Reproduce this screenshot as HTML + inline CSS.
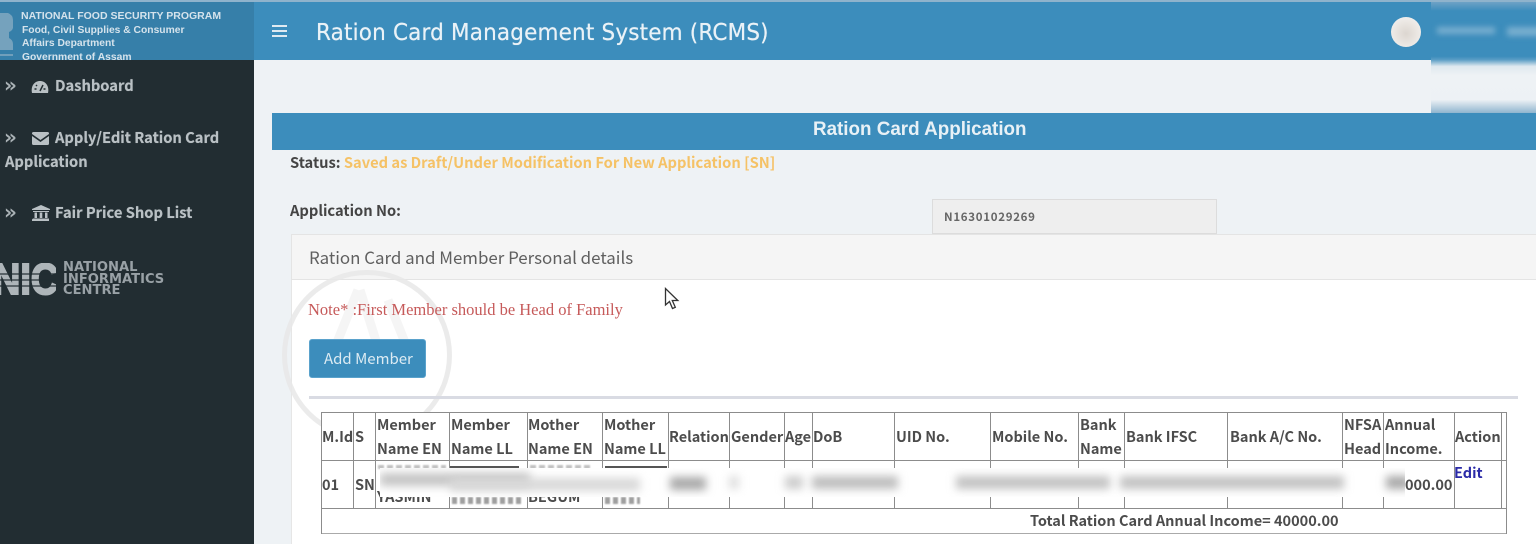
<!DOCTYPE html>
<html style="background:#eef2f5"><head><meta charset="utf-8"><style>
html,body{margin:0;padding:0}
body{width:1536px;height:544px;position:relative;overflow:hidden;background:#eef2f5;font-family:"Noto Sans CJK JP","DejaVu Sans",sans-serif;color:#444}
#w{position:absolute;left:0;top:0;width:1536px;height:544px;overflow:hidden;filter:blur(.35px)}
.a{position:absolute;white-space:nowrap}
.b{font-weight:700}
.ln{position:absolute;background:#8c8c8c}
.h{left:321px;width:1186px;height:1px}
.v{top:412px;width:1px;height:97px}
.th{position:absolute;font-weight:700;font-size:14.5px;line-height:24px;color:#4c4c4c;white-space:nowrap}
.nav{color:#b9c0c4;font-weight:700;font-size:14.7px;text-shadow:0 0 .5px #b9c0c4}
.chev{color:#aab2b6;font-weight:700;font-size:20px;line-height:20px;font-family:"DejaVu Sans",sans-serif}
.bl{position:absolute;top:476px;height:13px;filter:blur(4.5px)}
svg{position:absolute;overflow:visible}
</style></head><body><div id="w">
<div class="a" style="left:0;top:0;width:1536px;height:60px;background:#3c8dbc;border-top:2px solid #8fb3cc;box-sizing:border-box"></div>
<div class="a" style="left:0;top:2px;width:254px;height:58px;background:#367fa9;overflow:hidden">
 <div class="a b" style="left:21px;top:7px;font:700 10.5px/14px 'Liberation Sans',sans-serif;color:#d5e3ec">NATIONAL FOOD SECURITY PROGRAM</div>
 <div class="a b" style="left:22px;top:22px;font:700 10.3px/13px 'Liberation Sans',sans-serif;color:#d5e3ec">Food, Civil Supplies &amp; Consumer<br>Affairs Department<br><span style="position:relative;top:1px">Government of Assam</span></div>
 <svg style="left:0;top:0" width="16" height="58" viewBox="0 0 16 58"><path d="M0 11H8Q13 13 13 18V26Q12 29 9 30V36Q13 38 13 42V48H0z" fill="#a9bfce" opacity=".55"/><path d="M0 52H13V54H0z" fill="#a9bfce" opacity=".5"/></svg>
</div>
<div class="a" style="left:272px;top:25px;width:15px;height:2.4px;background:#dfeaf1;box-shadow:0 5px 0 #dfeaf1,0 10px 0 #dfeaf1"></div>
<div class="a" style="left:316px;top:15px;font:400 23.5px/34px 'DejaVu Sans',sans-serif;color:#eaf2f7;transform:scaleX(.915);transform-origin:0 0;letter-spacing:.2px;text-shadow:0 0 .6px #eaf2f7">Ration Card Management System (RCMS)</div>
<div class="a" style="left:1391px;top:17px;width:30px;height:30px;border-radius:50%;background:radial-gradient(circle at 50% 55%,#dcd6d0 0,#ece8e4 55%,#f4f6f8 100%)"></div>
<div class="a" style="left:1431px;top:2px;width:105px;height:111px;overflow:hidden;background:linear-gradient(#6ea2c5 0,#3c8dbc 8%,#3c8dbc 49%,#5a9dc5 52%,#dfe9ef 58%,#eef2f5 66%,#edf1f5 88%,#8fb5cf 100%)">
 <div class="a" style="left:6px;top:25px;width:58px;height:7px;background:#78aecf;filter:blur(3px)"></div>
 <div class="a" style="left:76px;top:25px;width:40px;height:9px;background:#78aecf;filter:blur(3px)"></div>
</div>

<div class="a" style="left:0;top:60px;width:254px;height:484px;background:#222d32"></div>
<div class="a chev" style="left:4px;top:75px">»</div>
<svg style="left:31px;top:80px" width="18" height="14" viewBox="0 0 18 14"><path d="M1 13C-.5 6 3.500 1 9 1s9.500 5 8 12z" fill="#b9c0c4"/><path d="M9 11L12 5M3.500 9h2M12.500 9h2M5 5l1 1" stroke="#222d32" stroke-width="1.500"/></svg>
<div class="a nav" style="left:55px;top:75px;line-height:22px">Dashboard</div>
<div class="a chev" style="left:4px;top:127px">»</div>
<svg style="left:32px;top:132px" width="17" height="13" viewBox="0 0 17 13"><path d="M0 1.500Q0 0 1.500 0h14Q17 0 17 1.500v.5l-8.500 6L0 2zM0 4l8.500 6L17 4v7.500Q17 13 15.500 13h-14Q0 13 0 11.500z" fill="#b9c0c4"/></svg>
<div class="a nav" style="left:55px;top:127px;line-height:22px">Apply/Edit Ration Card</div>
<div class="a nav" style="left:5px;top:151px;line-height:22px">Application</div>
<div class="a chev" style="left:4px;top:202px">»</div>
<svg style="left:32px;top:205px" width="18" height="16" viewBox="0 0 18 16"><path d="M9 0l9 4v1H0V4zM1 6h16v1H1zM2.500 7.500h2.500v5.500H2.500zM7.700 7.500h2.600v5.500H7.700zM13 7.500h2.500v5.500H13zM1 13.500h16V16H0v-1.500z" fill="#b9c0c4"/></svg>
<div class="a nav" style="left:55px;top:202px;line-height:22px">Fair Price Shop List</div>
<div class="a" style="left:0;top:263px;width:56px;height:33px;overflow:hidden"><span class="a" style="left:-7px;top:-5px;font:700 44px/44px 'Liberation Sans',sans-serif;color:#aeb5b9;transform:scaleX(.86);transform-origin:0 0;-webkit-text-stroke:2px #aeb5b9">NIC</span></div>
<div class="a" style="left:0;top:273px;width:56px;height:2px;background:#222d32;opacity:.6"></div>
<div class="a" style="left:0;top:279px;width:56px;height:2px;background:#222d32;opacity:.6"></div>
<div class="a" style="left:0;top:285px;width:56px;height:2px;background:#222d32;opacity:.6"></div>
<div class="a" style="left:63px;top:262px;font:700 13.500px/11.500px 'DejaVu Sans',sans-serif;color:#99a1a6;transform:scaleX(.97);transform-origin:0 0">NATIONAL<br>INFORMATICS<br>CENTRE</div>

<div class="a" style="left:272px;top:113px;width:1264px;height:37px;background:#3c8dbc"></div>
<div class="a" style="left:813px;top:117px;font:700 19.600px/25px 'Liberation Sans',sans-serif;color:#e8f1f6;transform:scaleX(.96);transform-origin:0 0">Ration Card Application</div>
<div class="a b" style="left:290px;top:153px;font-size:14.700px;line-height:20px;color:#444">Status: <span style="color:#f5c266">Saved as Draft/Under Modification For New Application [SN]</span></div>
<div class="a b" style="left:290px;top:201px;font-size:14.700px;line-height:20px;color:#444">Application No:</div>
<div class="a" style="left:932px;top:199px;width:285px;height:35px;background:#eeeeee;border:1px solid #dcdcdc;box-sizing:border-box"></div>
<div class="a b" style="left:944px;top:209px;font-size:11.500px;line-height:16px;color:#666;letter-spacing:.7px">N16301029269</div>

<div class="a" style="left:291px;top:234px;width:1245px;height:310px;background:#fff;border-left:1px solid #e6e6e6;box-sizing:border-box"></div>
<div class="a" style="left:291px;top:234px;width:1245px;height:46px;background:#f5f5f5;border:1px solid #e4e4e4;border-right:0;box-sizing:border-box"></div>
<div class="a" style="left:309px;top:245px;font-size:16.900px;line-height:24px;color:#5f5f5f">Ration Card and Member Personal details</div>
<div class="a" style="left:282px;top:270px;width:170px;height:170px;border:5px solid #e8e8e8;border-radius:50%;box-sizing:border-box;opacity:.85"></div>
<svg style="left:320px;top:290px;opacity:.5" width="100" height="70" viewBox="0 0 100 70"><path d="M10 70L38 0M62 70L40 0M68 10L92 70" stroke="#ececec" stroke-width="9" fill="none"/></svg>
<div class="a" style="left:308px;top:300px;font:400 16.500px/20px 'Liberation Serif',serif;color:#c65a5a">Note* :First Member should be Head of Family</div>
<svg style="left:664px;top:287px" width="16" height="24" viewBox="0 0 16 24"><path d="M1.500 1.500V18l4-3.500 3 7 2.800-1.200-3-6.800h5.500z" fill="#fff" stroke="#333" stroke-width="1.300"/></svg>
<div class="a" style="left:309px;top:339px;width:117px;height:39px;background:#3c8dbc;border:1px solid #5aa2cc;border-radius:3px;box-sizing:border-box"></div>
<div class="a" style="left:324px;top:348px;font-size:15px;line-height:22px;color:#dcebf3">Add Member</div>
<div class="a" style="left:309px;top:396px;width:1209px;height:3px;background:#d9dbe3"></div>

<div class="a" style="left:321px;top:412px;width:1185px;height:121px;background:#fff"></div>
<div class="ln h" style="top:412px"></div>
<div class="ln h" style="top:460px"></div>
<div class="ln h" style="top:508px"></div>
<div class="ln h" style="top:533px;background:#aaa"></div>
<div class="ln" style="left:321px;top:412px;width:1px;height:122px"></div>
<div class="ln" style="left:1506px;top:412px;width:1px;height:122px"></div>
<div class="ln v" style="left:353px"></div>
<div class="ln v" style="left:375px"></div>
<div class="ln v" style="left:449px"></div>
<div class="ln v" style="left:527px"></div>
<div class="ln v" style="left:602px"></div>
<div class="ln v" style="left:668px"></div>
<div class="ln v" style="left:729px"></div>
<div class="ln v" style="left:784px"></div>
<div class="ln v" style="left:812px"></div>
<div class="ln v" style="left:894px"></div>
<div class="ln v" style="left:990px"></div>
<div class="ln v" style="left:1078px"></div>
<div class="ln v" style="left:1124px"></div>
<div class="ln v" style="left:1227px"></div>
<div class="ln v" style="left:1342px"></div>
<div class="ln v" style="left:1383px"></div>
<div class="ln v" style="left:1454px"></div>
<div class="ln v" style="left:1501px"></div>

<div class="th" style="left:322px;top:425px">M.Id</div>
<div class="th" style="left:355px;top:425px">S</div>
<div class="th" style="left:377px;top:413px">Member<br>Name EN</div>
<div class="th" style="left:451px;top:413px">Member<br>Name LL</div>
<div class="th" style="left:528px;top:413px">Mother<br>Name EN</div>
<div class="th" style="left:604px;top:413px">Mother<br>Name LL</div>
<div class="th" style="left:669px;top:425px">Relation</div>
<div class="th" style="left:731px;top:425px">Gender</div>
<div class="th" style="left:785px;top:425px">Age</div>
<div class="th" style="left:813px;top:425px">DoB</div>
<div class="th" style="left:896px;top:425px">UID No.</div>
<div class="th" style="left:992px;top:425px">Mobile No.</div>
<div class="th" style="left:1080px;top:413px">Bank<br>Name</div>
<div class="th" style="left:1126px;top:425px">Bank IFSC</div>
<div class="th" style="left:1230px;top:425px">Bank A/C No.</div>
<div class="th" style="left:1344px;top:413px">NFSA<br>Head</div>
<div class="th" style="left:1385px;top:413px">Annual<br>Income.</div>
<div class="th" style="left:1455px;top:425px">Action</div>

<div class="th" style="left:322px;top:473px">01</div>
<div class="th" style="left:355px;top:473px">SN</div>
<div class="th" style="left:377px;top:489px;line-height:16px">YASMIN</div>
<div class="th" style="left:528px;top:489px;line-height:16px">BEGUM</div>
<div class="a" style="left:452px;top:497px;width:72px;height:7px;background:repeating-linear-gradient(90deg,#777 0 5px,#fff 5px 8px);opacity:.7;filter:blur(.8px)"></div>
<div class="a" style="left:605px;top:497px;width:35px;height:7px;background:repeating-linear-gradient(90deg,#777 0 5px,#fff 5px 8px);opacity:.7;filter:blur(.8px)"></div>
<div class="a" style="left:450px;top:466px;width:69px;height:2px;background:#555"></div>
<div class="a" style="left:605px;top:466px;width:62px;height:2px;background:#555"></div>
<div class="a" style="left:378px;top:465px;width:68px;height:4px;background:repeating-linear-gradient(90deg,#999 0 6px,#fff 6px 9px);opacity:.6;filter:blur(.8px)"></div>
<div class="a" style="left:530px;top:465px;width:62px;height:4px;background:repeating-linear-gradient(90deg,#999 0 6px,#fff 6px 9px);opacity:.6;filter:blur(.8px)"></div>
<div class="a" style="left:380px;top:468px;width:1025px;height:29px;background:#fff"></div>
<div class="a" style="left:380px;top:468px;width:1025px;height:29px;overflow:hidden">
<div class="bl" style="left:0;top:5px;width:150px;background:#c4c4c4"></div>
<div class="bl" style="left:70px;top:10px;width:190px;background:#d8d8d8"></div>
<div class="bl" style="left:290px;top:9px;width:36px;background:#a8a8a8"></div>
<div class="bl" style="left:349px;top:8px;width:10px;background:#ddd"></div>
<div class="bl" style="left:405px;top:8px;width:18px;background:#ccc"></div>
<div class="bl" style="left:432px;top:8px;width:86px;background:#bdbdbd"></div>
<div class="bl" style="left:576px;top:8px;width:154px;background:#c2c2c2"></div>
<div class="bl" style="left:740px;top:8px;width:224px;background:#c2c2c2"></div>
<div class="bl" style="left:1006px;top:8px;width:24px;background:#a8a8a8"></div>
</div>
<div class="th" style="left:1405px;top:473px">000.00</div>
<div class="a b" style="left:1454px;top:461px;font-size:14.500px;line-height:24px;color:#2a2aa8">Edit</div>
<div class="th" style="left:1030px;top:509px">Total Ration Card Annual Income= 40000.00</div>
</div></body></html>
